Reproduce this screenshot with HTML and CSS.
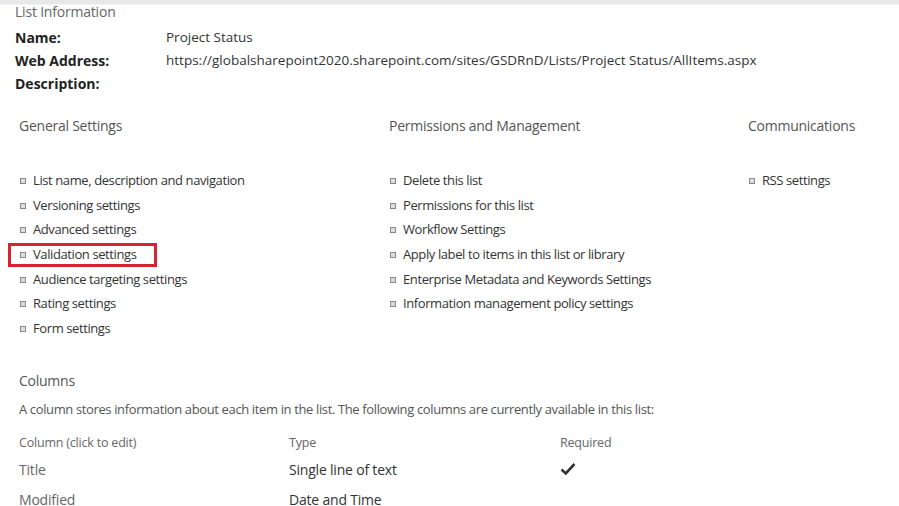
FILE: index.html
```html
<!DOCTYPE html>
<html>
<head>
<meta charset="utf-8">
<link rel="stylesheet" href="styles.css">
</head>
<body>
<div class="topbar"></div>
<div class="page">
  <div class="info-title">List Information</div>
  <div class="info">
    <div class="lbl">Name:</div><div class="val">Project Status</div>
    <div class="lbl">Web Address:</div><div class="val">https://globalsharepoint2020.sharepoint.com/sites/GSDRnD/Lists/Project Status/AllItems.aspx</div>
    <div class="lbl">Description:</div><div class="val"></div>
  </div>
  <div class="settings">
    <div class="col col1">
      <div class="head">General Settings</div>
      <ul>
        <li>List name, description and navigation</li>
        <li>Versioning settings</li>
        <li>Advanced settings</li>
        <li class="hl">Validation settings</li>
        <li>Audience targeting settings</li>
        <li>Rating settings</li>
        <li>Form settings</li>
      </ul>
    </div>
    <div class="col col2">
      <div class="head">Permissions and Management</div>
      <ul>
        <li>Delete this list</li>
        <li>Permissions for this list</li>
        <li>Workflow Settings</li>
        <li>Apply label to items in this list or library</li>
        <li>Enterprise Metadata and Keywords Settings</li>
        <li>Information management policy settings</li>
      </ul>
    </div>
    <div class="col col3">
      <div class="head">Communications</div>
      <ul>
        <li>RSS settings</li>
      </ul>
    </div>
  </div>
  <div class="columns">
    <div class="head">Columns</div>
    <div class="desc">A column stores information about each item in the list. The following columns are currently available in this list:</div>
    <div class="table">
      <div class="th">Column (click to edit)</div><div class="th">Type</div><div class="th">Required</div>
      <div class="td">Title</div><div class="td dark">Single line of text</div><div class="td"><svg class="check" viewBox="0 0 16 14" width="16" height="14"><path d="M1.5 7.5 L5.8 11.5 L14.5 2" fill="none" stroke="#333" stroke-width="2.6"/></svg></div>
      <div class="td">Modified</div><div class="td dark">Date and Time</div><div class="td"></div>
    </div>
  </div>
</div>
</body>
</html>
```

FILE: styles.css
```css
html, body {
  margin: 0;
  padding: 0;
  background: #fff;
}
body {
  font-family: "Open Sans", "Noto Sans", sans-serif;
  color: #333;
  font-size: 13px;
  width: 899px;
  height: 506px;
  overflow: hidden;
}
.topbar {
  height: 4px;
  background: #e8e8e8;
  border-bottom: 1px solid #f2f2f2;
}
.page {
  padding-left: 15px;
}
.info-title {
  font-size: 14px;
  color: #666;
  line-height: 14px;
  letter-spacing: -0.2px;
}
.info {
  display: grid;
  grid-template-columns: 151px 1fr;
  margin-top: 7px;
  line-height: 23px;
  font-size: 13.5px;
}
.lbl {
  font-weight: bold;
  color: #222;
  font-size: 14px;
}
.val {
  color: #333;
  height: 23px;
}
.settings {
  display: flex;
  margin-top: 22px;
  padding-left: 4px;
}
.col1 { width: 370px; }
.col2 { width: 359px; }
.col3 { flex: 1; }
.head {
  font-size: 14px;
  color: #555;
  line-height: 18px;
  letter-spacing: -0.25px;
}
ul {
  list-style: none;
  margin: 33px 0 0 0;
  padding: 0;
}
li {
  position: relative;
  line-height: 24.67px;
  height: 24.67px;
  padding-left: 14px;
  color: #333;
  letter-spacing: -0.4px;
}
li::before {
  content: "";
  position: absolute;
  left: 1px;
  top: 10px;
  width: 4px;
  height: 4px;
  border: 1px solid #888;
  background: #ddd;
}
li.hl::after {
  content: "";
  position: absolute;
  left: -11px;
  top: 1px;
  width: 143px;
  height: 18px;
  border: 3px solid #d9232e;
}
.columns {
  padding-left: 4px;
  margin-top: 31px;
}
.desc {
  color: #555;
  margin-top: 9px;
  line-height: 20px;
  letter-spacing: -0.37px;
}
.table {
  display: grid;
  grid-template-columns: 270px 271px 1fr;
  margin-top: 14px;
}
.th {
  font-size: 12.5px;
  color: #666;
  line-height: 20px;
  letter-spacing: -0.2px;
  margin-bottom: 2px;
}
.td {
  color: #666;
  line-height: 30px;
  height: 30px;
  font-size: 14px;
  letter-spacing: -0.2px;
}
.td.dark { color: #333; }
.check {
  vertical-align: middle;
  margin-top: -4px;
}
```
